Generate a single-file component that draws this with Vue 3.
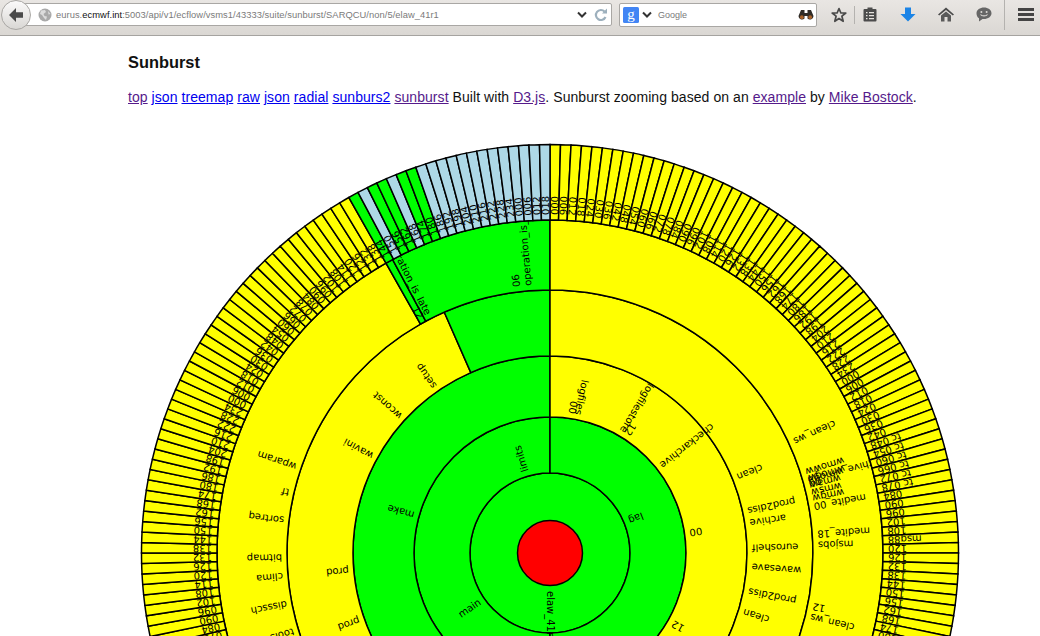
<script setup>
// geometry of the sunburst, measured from the centre of the svg
const cx = 422
const cy = 428
const GREEN = '#00ff00'
const YELLOW = '#ffff00'
const BLUE = '#add8e6'

function pt(r, a) {
  const t = (a * Math.PI) / 180
  return (cx + r * Math.sin(t)).toFixed(2) + ' ' + (cy - r * Math.cos(t)).toFixed(2)
}

function sector(r0, r1, a0, a1) {
  const large = a1 - a0 > 180 ? 1 : 0
  return `M${pt(r0, a0)}L${pt(r1, a0)}A${r1} ${r1} 0 ${large} 1 ${pt(r1, a1)}L${pt(r0, a1)}A${r0} ${r0} 0 ${large} 0 ${pt(r0, a0)}Z`
}

const rings = [
  [80, 136, -180, 0, GREEN],
  [80, 136, 0, 180, GREEN],
  [136, 197, -180, 0, GREEN],
  [136, 197, 0, 180, YELLOW],
  [197, 263, -180, -23.7, YELLOW],
  [197, 263, -23.7, 0, GREEN],
  [197, 263, 0, 180, YELLOW],
  [263, 333, -180, -29.5, YELLOW],
  [263, 333, -29.5, -28.2, GREEN],
  [263, 333, -28.2, 0, GREEN],
  [263, 333, 0, 180, YELLOW]
].map(([r0, r1, a0, a1, fill]) => ({ d: sector(r0, r1, a0, a1), fill }))

// text, angle, radius, flipped (flipped text ends at the radius)
const labels = [
  ['elaw_41r1', 180, 38, false],
  ['lag', 68, 85, true],
  ['limits', -17, 85, false],
  ['main', -124.4, 85, true],
  ['make', -74.5, 141, false],
  ['00', 81.8, 141, true],
  ['12', 119.8, 141, true],
  ['logfiles', 11.5, 141, true],
  ['00', 9, 141, true],
  ['logfilestore', 31, 141, true],
  ['12', 33, 141, true],
  ['checkarchive', 52, 141, true],
  ['clean', 68, 202, true],
  ['prod2diss', 78, 202, true],
  ['archive', 81.5, 202, true],
  ['euroshelf', 88.6, 202, true],
  ['wavesave', 94, 202, true],
  ['prod2diss', 101, 202, true],
  ['clean', 107, 202, true],
  ['setup', -35, 202, false],
  ['wconst', -47.8, 202, false],
  ['wavini', -61.5, 202, false],
  ['prod', -95, 202, false],
  ['prod', -109.4, 202, false],
  ['wparam', -71.3, 268, false],
  ['tf', -77, 268, false],
  ['sortreq', -83, 268, false],
  ['bitmap', -91, 268, false],
  ['clima', -95, 268, false],
  ['disssch', -101, 268, false],
  ['tools', -107, 268, false],
  ['operation_is_', -4.7, 268, false],
  ['06', -7.1, 268, false],
  ['operation_is_late', -27, 268, true],
  ['12', -28.8, 268, true],
  ['clean_ws', 65.5, 268, true],
  ['archive_wmoga', 74.4, 268, true],
  ['wmoww', 72.5, 268, true],
  ['wmogw', 74, 268, true],
  ['wmaw', 75.5, 268, true],
  ['wmsw', 77, 268, true],
  ['wmgw', 78.3, 268, true],
  ['00', 75, 268, true],
  ['medite_00', 80, 268, true],
  ['medite_18', 86, 268, true],
  ['msjobs', 88.3, 268, true],
  ['12', 101.5, 268, true],
  ['clean_ws', 103.8, 268, true]
].map(toLabel)

function toLabel([text, a, r, flip]) {
  return {
    text,
    anchor: flip ? 'end' : 'start',
    transform: `rotate(${a - 90} ${cx} ${cy}) translate(${cx + r} ${cy})${flip ? ' rotate(180)' : ''}`
  }
}

// outer ring: 244 equal cells clockwise from the top
const CELLS = 244
const step = 360 / CELLS
const blue = [1, 2, 3, 4, 5, 6, 7, 8, 9, 10, 11, 12, 13, 16, 19]
const green = [14, 15, 17, 18, 20]

const cells = []
const cellLabels = []
for (let i = 0; i < CELLS; i++) {
  const back = CELLS - i
  let fill = YELLOW
  if (blue.includes(back)) fill = BLUE
  if (green.includes(back)) fill = GREEN
  const a0 = i * step
  cells.push({ d: sector(333, 408.5, a0, a0 + step), fill })

  let text = String((i % 40) * 6).padStart(3, '0')
  if (i >= 48 && i <= 53) text = 'tc ' + text
  if (i === 59) text = 'msg88'
  const mid = a0 + step / 2
  cellLabels.push(toLabel([text, mid > 180 ? mid - 360 : mid, 338, mid <= 180]))
}
</script>

<template>
  <div class="page">
    <div class="toolbar">
      <div class="back">
        <svg width="16" height="16" viewBox="0 0 16 16">
          <path d="M8 1 1 8 8 15V10.8H15V5.2H8Z" fill="#4a4a4a" />
        </svg>
      </div>
      <div class="urlbar">
        <svg class="globe" width="14" height="14" viewBox="0 0 14 14">
          <circle cx="7" cy="7" r="6.5" fill="#a9a9a9" />
          <path d="M3 2.5 7 2 8 4 5.5 6 6.5 8 9 8.5 8 12 6 10 4 7 2 6ZM10 3 12.5 6 10.5 6.5Z" fill="#dcdcdc" />
        </svg>
        <span class="url">eurus.<b>ecmwf.int</b>:5003/api/v1/ecflow/vsms1/43333/suite/sunburst/SARQCU/non/5/elaw_41r1</span>
        <svg class="chev" width="10" height="8" viewBox="0 0 10 8">
          <path d="M1 1.5 5 5.5 9 1.5" fill="none" stroke="#333" stroke-width="2" />
        </svg>
        <svg class="reload" width="14" height="14" viewBox="0 0 14 14">
          <path d="M11.5 9A5 5 0 1 1 10.5 3.5" fill="none" stroke="#9db0bd" stroke-width="2.2" />
          <path d="M8 5.5H13V0.5Z" fill="#9db0bd" />
        </svg>
      </div>
      <div class="search">
        <svg width="16" height="16" viewBox="0 0 16 16">
          <rect width="16" height="16" rx="1.5" fill="#4285f4" />
          <text x="8" y="12" class="g-letter" text-anchor="middle">g</text>
        </svg>
        <svg class="chev-s" width="10" height="8" viewBox="0 0 10 8">
          <path d="M1 1.5 5 5.5 9 1.5" fill="none" stroke="#333" stroke-width="2" />
        </svg>
        <span class="engine">Google</span>
        <svg class="bino" width="16" height="12" viewBox="0 0 16 12">
          <path d="M3 1H6.5V4H9.5V1H13L15.5 7A3.5 3.5 0 0 1 9.5 9.5V7H6.5V9.5A3.5 3.5 0 0 1 0.5 7Z" fill="#2e2a26" />
          <circle cx="3.8" cy="8.2" r="1.9" fill="#a8622a" />
          <circle cx="12.2" cy="8.2" r="1.9" fill="#a8622a" />
        </svg>
      </div>
      <svg class="ic star" width="16" height="16" viewBox="0 0 16 16">
        <path d="M8 1.6 9.9 6H14.8L10.9 9.2 12.2 14.3 8 11.5 3.8 14.3 5.1 9.2 1.2 6H6.1Z" fill="none" stroke="#4a4a4a" stroke-width="1.7" stroke-linejoin="round" />
      </svg>
      <div class="sep short"></div>
      <svg class="ic clip" width="14" height="15" viewBox="0 0 14 15">
        <path d="M4.5 0.5H9.5V2H12.5A1 1 0 0 1 13.5 3V13.5A1 1 0 0 1 12.5 14.5H1.5A1 1 0 0 1 0.5 13.5V3A1 1 0 0 1 1.5 2H4.5Z" fill="#4c4c4c" />
        <path d="M3 5H4.5V6.2H3ZM6 5H11V6.2H6ZM3 8H4.5V9.2H3ZM6 8H11V9.2H6ZM3 11H4.5V12.2H3ZM6 11H11V12.2H6Z" fill="#e6e3df" />
      </svg>
      <svg class="ic arrow" width="16" height="15" viewBox="0 0 16 15">
        <path d="M5 0.5H11V7H15.5L8 14.5 0.5 7H5Z" fill="#1c84e6" />
      </svg>
      <svg class="ic home" width="16" height="15" viewBox="0 0 16 15">
        <path d="M8 0.5 16 7.5 14.8 8.6 8 3 1.2 8.6 0 7.5Z" fill="#4c4c4c" />
        <path d="M3 8.5 8 4.4 13 8.5V14.5H9.5V10H6.5V14.5H3Z" fill="#5a5a5a" />
      </svg>
      <svg class="ic chat" width="16" height="15" viewBox="0 0 16 15">
        <path d="M8 0.5C12 0.5 15.5 2.8 15.5 6.2S12 12 8 12H6.5L3 14.5V11.3C1.4 10.3 0.5 8.4 0.5 6.2 0.5 2.8 4 0.5 8 0.5Z" fill="#666" />
        <circle cx="5.4" cy="5" r="1" fill="#dcd9d5" />
        <circle cx="10.6" cy="5" r="1" fill="#dcd9d5" />
        <path d="M4.5 7.5C6 9.4 10 9.4 11.5 7.5" fill="none" stroke="#dcd9d5" stroke-width="1.2" />
      </svg>
      <div class="sep tall"></div>
      <div class="menu"><i></i><i></i><i></i></div>
    </div>

    <div class="content">
      <h3>Sunburst</h3>
      <p><a class="seen" href="#">top</a> <a href="#">json</a> <a href="#">treemap</a> <a href="#">raw</a> <a href="#">json</a> <a href="#">radial</a> <a href="#">sunburs2</a> <a class="seen" href="#">sunburst</a> Built with <a class="seen" href="#">D3.js</a>. Sunburst zooming based on an <a class="seen" href="#">example</a> by <a class="seen" href="#">Mike Bostock</a>.</p>
      <svg class="chart" width="840" height="511">
        <circle :cx="cx" :cy="cy" r="80" :fill="GREEN" class="edge" />
        <circle :cx="cx" :cy="cy" r="32.5" fill="#ff0000" class="edge" />
        <path v-for="(r, i) in rings" :key="i" :d="r.d" :fill="r.fill" class="edge" />
        <text v-for="(l, i) in labels" :key="i" :transform="l.transform" :text-anchor="l.anchor" dy=".35em">{{ l.text }}</text>
        <path v-for="(c, i) in cells" :key="i" :d="c.d" :fill="c.fill" class="edge" />
        <text v-for="(l, i) in cellLabels" :key="i" :transform="l.transform" :text-anchor="l.anchor" dy=".35em">{{ l.text }}</text>
      </svg>
    </div>
  </div>
</template>

<style scoped>
.page {
  width: 1040px;
  height: 636px;
  overflow: hidden;
  background: #fff;
}

.toolbar {
  box-sizing: border-box;
  height: 36px;
  padding-bottom: 6px;
  display: flex;
  align-items: center;
  background: linear-gradient(#e9e6e3, #dad7d3);
  border-bottom: 1px solid #a5a3a0;
}

.back {
  width: 30px;
  height: 30px;
  margin-left: 1px;
  border-radius: 50%;
  border: 1px solid #a9a7a4;
  background: linear-gradient(#fbfafa, #d9d7d4);
  display: flex;
  align-items: center;
  justify-content: center;
  flex: none;
  position: relative;
  z-index: 1;
  box-sizing: border-box;
}

.urlbar {
  box-sizing: border-box;
  width: 588px;
  height: 23px;
  margin-left: -7px;
  padding-left: 13px;
  display: flex;
  align-items: center;
  background: #fff;
  border: 1px solid #a9a7a4;
  border-radius: 2px;
  flex: none;
}

.url {
  margin-left: 4px;
  flex: 1;
  font: 9.35px "Liberation Sans", Arial, sans-serif;
  letter-spacing: 0.05px;
  color: #7a7a7a;
  white-space: nowrap;
}

.url b {
  font-weight: normal;
  color: #111;
}

.chev {
  margin-right: 7px;
}

.reload {
  margin-right: 3px;
}

.search {
  box-sizing: border-box;
  width: 198px;
  height: 24px;
  margin-left: 7px;
  padding: 0 2px 0 3px;
  display: flex;
  align-items: center;
  background: #fff;
  border: 1px solid #a9a7a4;
  border-radius: 2px;
  flex: none;
}

.chev-s {
  margin-left: 3px;
}

.engine {
  margin-left: 6px;
  flex: 1;
  font: 9px "Liberation Sans", Arial, sans-serif;
  color: #7a7a7a;
}

.g-letter {
  font: 15px "Liberation Serif", serif;
  fill: #fff;
}

.ic {
  flex: none;
}

.star {
  margin-left: 14px;
}

.sep {
  flex: none;
  width: 1px;
  background: #b4b2af;
}

.sep.short {
  height: 18px;
  margin-left: 7px;
}

.sep.tall {
  height: 30px;
  margin-left: 12px;
}

.clip {
  margin-left: 8px;
}

.arrow {
  margin-left: 23px;
}

.home,
.chat {
  margin-left: 22px;
}

.menu {
  margin-left: 13px;
  width: 16px;
  display: flex;
  flex-direction: column;
  gap: 2px;
}

.menu i {
  display: block;
  height: 3px;
  background: #444;
}

.content {
  padding-left: 128px;
}

h3 {
  margin: 17px 0 0;
  font: bold 16.4px/19px "Liberation Sans", Arial, sans-serif;
  color: #111;
}

p {
  margin: 17px 0 0;
  font: 14px/16px "Liberation Sans", Arial, sans-serif;
  letter-spacing: 0.06px;
  color: #111;
  white-space: nowrap;
}

a {
  color: #0000ee;
}

a.seen {
  color: #551a8b;
}

.chart {
  display: block;
  margin-top: 20px;
}

.chart text {
  font: 10px "DejaVu Sans", sans-serif;
  fill: #000;
}

.edge {
  stroke: #000;
  stroke-width: 1.5;
}
</style>

<style>
html,
body {
  margin: 0;
  overflow: hidden;
}
</style>
